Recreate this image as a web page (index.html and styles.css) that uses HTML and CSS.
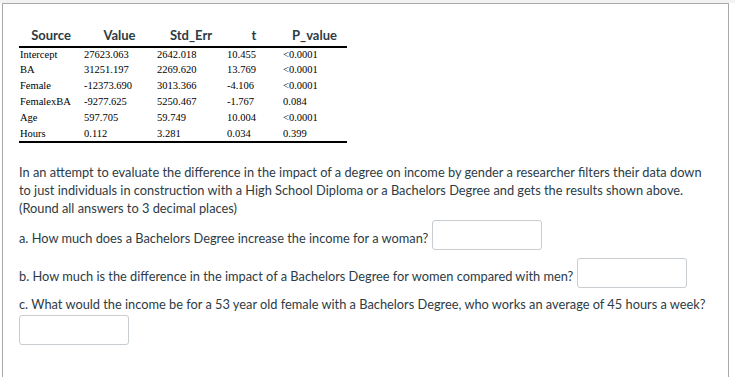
FILE: index.html
```html
<!DOCTYPE html>
<html>
<head>
<meta charset="utf-8">
<link rel="stylesheet" href="styles.css">
</head>
<body>
<div class="topstrip"></div>
<div class="frame">
  <table class="reg">
    <thead>
      <tr><th class="c1">Source</th><th class="c2">Value</th><th class="c3">Std_Err</th><th class="c4">t</th><th class="c5">P_value</th></tr>
    </thead>
    <tbody>
      <tr><td>Intercept</td><td>27623.063</td><td>2642.018</td><td>10.455</td><td>&lt;0.0001</td></tr>
      <tr><td>BA</td><td>31251.197</td><td>2269.620</td><td>13.769</td><td>&lt;0.0001</td></tr>
      <tr><td>Female</td><td>-12373.690</td><td>3013.366</td><td>-4.106</td><td>&lt;0.0001</td></tr>
      <tr><td>FemalexBA</td><td>-9277.625</td><td>5250.467</td><td>-1.767</td><td>0.084</td></tr>
      <tr><td>Age</td><td>597.705</td><td>59.749</td><td>10.004</td><td>&lt;0.0001</td></tr>
      <tr><td>Hours</td><td>0.112</td><td>3.281</td><td>0.034</td><td>0.399</td></tr>
    </tbody>
  </table>
  <p class="intro">In an attempt to evaluate the difference in the impact of a degree on income by gender a researcher filters their data down to just individuals in construction with a High School Diploma or a Bachelors Degree and gets the results shown above. (Round all answers to 3 decimal places)</p>
  <div class="q qa"><span class="qt">a. How much does a Bachelors Degree increase the income for a woman?</span><input class="ans" type="text"></div>
  <div class="q qb"><span class="qt">b. How much is the difference in the impact of a Bachelors Degree for women compared with men?</span><input class="ans" type="text"></div>
  <div class="qc">
    <div class="qct">c. What would the income be for a 53 year old female with a Bachelors Degree, who works an average of 45 hours a week?</div>
    <input class="ans" type="text">
  </div>
</div>
</body>
</html>
```
FILE: styles.css
```css
html, body {
  margin: 0;
  padding: 0;
  background: #fff;
}
body {
  width: 735px;
  height: 377px;
  overflow: hidden;
  font-family: Lato, "Liberation Sans", sans-serif;
  color: #2d3b45;
}
.topstrip {
  height: 3px;
  background: #f2f2f2;
}
.frame {
  margin-left: 2px;
  width: 727px;
  height: 374px;
  border: 1px solid #a9a9a9;
  border-bottom: none;
  padding: 0 0 0 16px;
  box-sizing: border-box;
}
.reg {
  border-collapse: collapse;
  margin-top: 24px;
  width: 328px;
}
.reg th {
  font-family: Lato, "Liberation Sans", sans-serif;
  font-weight: 700;
  font-size: 13px;
  line-height: 15px;
  color: #2d3b45;
  text-align: center;
  padding: 0 0 3px;
  border-bottom: 2px solid #000;
}
.c1 { width: 64px; }
.c2 { width: 73px; }
.c3 { width: 70px; }
.c4 { width: 56px; }
.c5 { width: 65px; }
.reg td {
  font-family: "Liberation Serif", serif;
  font-size: 10.5px;
  color: #000;
  padding: 0 0 0 1px;
  height: 16px;
  line-height: 16px;
  white-space: nowrap;
}
.reg tbody tr:first-child td { height: 14px; line-height: 14px; }
.reg tbody tr:last-child td { border-bottom: 2px solid #000; height: 15px; line-height: 15px; }
.intro {
  margin: 20px 0 0;
  font-size: 12.8px;
  line-height: 18px;
  width: 692px;
}
.q {
  display: flex;
  align-items: flex-end;
  gap: 4px;
  font-size: 12.8px;
  line-height: 18px;
}
.qt { padding-bottom: 3px; }
.qa { margin-top: 3px; }
.qb { margin-top: 8px; }
.qc {
  margin-top: 7px;
  font-size: 12.8px;
  line-height: 18px;
}
.qct { margin-bottom: 2px; }
.ans {
  display: block;
  width: 110px;
  height: 30px;
  box-sizing: border-box;
  border: 1px solid #c7cdd1;
  border-radius: 3px;
  margin: 0;
  padding: 0;
  background: #fff;
}
```
